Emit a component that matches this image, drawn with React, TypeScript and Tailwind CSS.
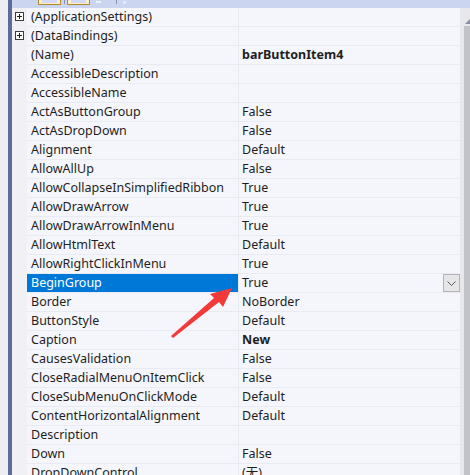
import React from 'react';

type Row = {
  name: string;
  value?: string;
  bold?: boolean;
  expandable?: boolean;
  selected?: boolean;
};

const rows: Row[] = [
  { name: '(ApplicationSettings)', expandable: true },
  { name: '(DataBindings)', expandable: true },
  { name: '(Name)', value: 'barButtonItem4', bold: true },
  { name: 'AccessibleDescription' },
  { name: 'AccessibleName' },
  { name: 'ActAsButtonGroup', value: 'False' },
  { name: 'ActAsDropDown', value: 'False' },
  { name: 'Alignment', value: 'Default' },
  { name: 'AllowAllUp', value: 'False' },
  { name: 'AllowCollapseInSimplifiedRibbon', value: 'True' },
  { name: 'AllowDrawArrow', value: 'True' },
  { name: 'AllowDrawArrowInMenu', value: 'True' },
  { name: 'AllowHtmlText', value: 'Default' },
  { name: 'AllowRightClickInMenu', value: 'True' },
  { name: 'BeginGroup', value: 'True', selected: true },
  { name: 'Border', value: 'NoBorder' },
  { name: 'ButtonStyle', value: 'Default' },
  { name: 'Caption', value: 'New', bold: true },
  { name: 'CausesValidation', value: 'False' },
  { name: 'CloseRadialMenuOnItemClick', value: 'False' },
  { name: 'CloseSubMenuOnClickMode', value: 'Default' },
  { name: 'ContentHorizontalAlignment', value: 'Default' },
  { name: 'Description' },
  { name: 'Down', value: 'False' },
  { name: 'DropDownControl', value: '(无)' },
];

function ExpandBox() {
  return (
    <svg width="9" height="9" viewBox="0 0 9 9" className="block">
      <rect x="0.5" y="0.5" width="8" height="8" fill="#ffffff" stroke="#3c3c3c" />
      <path d="M2 4.5h5M4.5 2v5" stroke="#1e1e1e" />
    </svg>
  );
}

function DropButton() {
  return (
    <div className="flex h-[18px] w-[17px] shrink-0 items-center justify-center border border-[#b4b4b8] bg-[#e6e6e9]">
      <svg width="9" height="5" viewBox="0 0 9 5">
        <path d="M0.5 0.5L4.5 4.5L8.5 0.5" fill="none" stroke="#5a5a5a" />
      </svg>
    </div>
  );
}

function Toolbar() {
  return (
    <div className="flex h-[8px] shrink-0 items-start overflow-hidden bg-[#ccd5f0]">
      <div className="ml-[26px] h-[5px] w-[23px] border-x border-b border-[#b8882c] bg-[#fcefc9] px-[3px] pb-[1px]">
        <div className="h-full bg-[#d4daf3]" />
      </div>
      <div className="ml-[3px] h-[4px] w-px bg-[#8c93b0]" />
      <div className="ml-[2px] h-[5px] w-[23px] border-x border-b border-[#b8882c] bg-[#fcefc9] px-[3px] pb-[1px]">
        <div className="h-full bg-[#d4daf3]" />
      </div>
      <div className="ml-[6px] mt-[1px] h-[2px] w-[5px] bg-[#eef1fb]" />
      <div className="ml-[15px] h-[4px] w-px bg-[#8c93b0]" />
      <div className="ml-[6px] mt-[1px] h-[3px] w-[3px] bg-[#e4e8f6]" />
    </div>
  );
}

function GridRow({ row }: { row: Row }) {
  return (
    <div className="flex h-[19px] shrink-0 border-b border-[#e9ebf2]">
      <div
        className={`flex w-[211px] items-center whitespace-nowrap pl-[4px] ${
          row.selected ? 'bg-[#0078d7] text-white' : 'text-[#1e1e1e]'
        }`}
      >
        {row.name}
      </div>
      <div className="w-px bg-[#e9ebf2]" />
      <div className="flex flex-1 items-center justify-between pl-[3px] text-[#1e1e1e]">
        <span className={row.bold ? 'font-bold' : ''}>{row.value}</span>
        {row.selected && <DropButton />}
      </div>
    </div>
  );
}

export default function App() {
  return (
    <div
      className="relative flex h-[475px] w-[470px] overflow-hidden bg-[#f0f0f3] text-[12.5px] leading-none"
      style={{ fontFamily: '"Noto Sans", "Noto Sans CJK SC", sans-serif' }}
    >
      <div className="w-[8px] bg-[#eeeef2]" />
      <div className="w-[4px] bg-[#5d6b99]" />
      <div className="flex min-h-0 flex-1 flex-col">
        <Toolbar />
        <div className="flex min-h-0 flex-1">
          {/* expander gutter */}
          <div className="flex w-[15px] flex-col bg-[#f0f0f5]">
            {rows.map((r, i) => (
              <div key={i} className="flex h-[19px] shrink-0 items-start pl-[3px] pt-[4px]">
                {r.expandable && <ExpandBox />}
              </div>
            ))}
          </div>
          <div className="flex w-[433px] flex-col bg-[#f5f6fb]">
            {rows.map((r, i) => (
              <GridRow key={i} row={r} />
            ))}
          </div>
          <div className="w-[4px] bg-[#e8e8ec]" />
          {/* vertical scrollbar */}
          <div className="flex w-[6px] flex-col bg-[#e8e8ec]">
            <div className="flex h-[16px] shrink-0 items-end justify-end">
              <svg width="6" height="5" viewBox="0 0 6 5">
                <path d="M6 0L6 5L1 5Z" fill="#8a8ea6" />
              </svg>
            </div>
            <div className="mt-[2px] flex-1 bg-[#c2c3c9]" />
          </div>
        </div>
      </div>

      {/* red callout arrow */}
      <svg className="pointer-events-none absolute left-0 top-0" width="470" height="475">
        <polygon
          points="232,288 223,307 219,302 173,338 171,336 214,298 210,294"
          fill="#f23a3a"
        />
      </svg>
    </div>
  );
}
